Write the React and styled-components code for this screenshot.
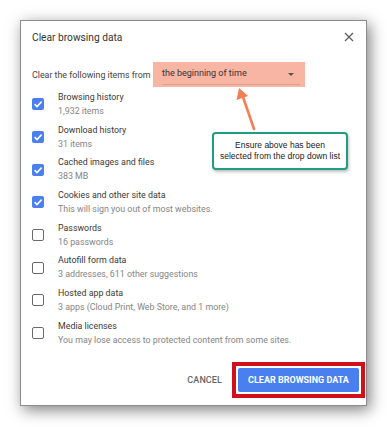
import React from 'react';
import styled, { createGlobalStyle } from 'styled-components';

const GlobalStyle = createGlobalStyle`
  html, body {
    margin: 0;
    padding: 0;
    background: #fff;
  }
  body {
    font-family: Roboto, "Liberation Sans", Arial, sans-serif;
  }
`;

const items = [
  { title: 'Browsing history', sub: '1,932 items', checked: true },
  { title: 'Download history', sub: '31 items', checked: true },
  { title: 'Cached images and files', sub: '383 MB', checked: true },
  { title: 'Cookies and other site data', sub: 'This will sign you out of most websites.', checked: true },
  { title: 'Passwords', sub: '16 passwords', checked: false },
  { title: 'Autofill form data', sub: '3 addresses, 611 other suggestions', checked: false },
  { title: 'Hosted app data', sub: '3 apps (Cloud Print, Web Store, and 1 more)', checked: false },
  { title: 'Media licenses', sub: 'You may lose access to protected content from some sites.', checked: false },
];

const App = () => {
  return (
    <Page>
      <GlobalStyle />
      <Dialog>
        <Header>
          <Title>Clear browsing data</Title>
          <CloseBtn>
            <svg width="10" height="10" viewBox="0 0 10 10">
              <path d="M1 1 L9 9 M9 1 L1 9" stroke="#5f5f5f" strokeWidth="1.3" />
            </svg>
          </CloseBtn>
        </Header>

        <RangeRow>
          <RangeLabel>Clear the following items from</RangeLabel>
          <RangeSelect>
            <SelectInner>
              <span>the beginning of time</span>
              <Caret />
            </SelectInner>
          </RangeSelect>
        </RangeRow>

        <List>
          {items.map((item) => (
            <Row key={item.title}>
              <Check $checked={item.checked}>
                {item.checked && (
                  <svg width="12" height="12" viewBox="0 0 12 12">
                    <path d="M2.6 6.2 L5 8.5 L9.6 3.6" fill="none" stroke="#fff" strokeWidth="1.6" />
                  </svg>
                )}
              </Check>
              <RowText>
                <RowTitle>{item.title}</RowTitle>
                <RowSub>{item.sub}</RowSub>
              </RowText>
            </Row>
          ))}
        </List>

        <Footer>
          <CancelBtn>CANCEL</CancelBtn>
          <Highlight>
            <PrimaryBtn>CLEAR BROWSING DATA</PrimaryBtn>
          </Highlight>
        </Footer>

        <Arrow width="24" height="44" viewBox="0 0 24 44">
          <path d="M19 42 L8 10" stroke="#f07f55" strokeWidth="2.6" strokeLinecap="round" />
          <path d="M4 1 L1.5 13 L13 9 Z" fill="#f07f55" />
        </Arrow>
        <Callout>
          Ensure above has been
          <br />
          selected from the drop down list
        </Callout>
      </Dialog>
    </Page>
  );
};

export default App;

const Page = styled.div`
  width: 387px;
  height: 427px;
  padding: 20px 0 0 20px;
  box-sizing: border-box;
`;

const Dialog = styled.div`
  position: relative;
  width: 347px;
  height: 386px;
  box-sizing: border-box;
  background: #fff;
  border: 1px solid #8c8c8c;
  box-shadow: 3px 4px 14px rgba(0, 0, 0, 0.5);
  display: flex;
  flex-direction: column;
`;

const Header = styled.div`
  height: 31px;
  padding: 0 7px 0 11px;
  display: flex;
  align-items: center;
  justify-content: space-between;
`;

const Title = styled.div`
  font-size: 10.2px;
  color: #333;
  padding-top: 1px;
`;

const CloseBtn = styled.div`
  width: 20px;
  height: 20px;
  display: flex;
  align-items: center;
  justify-content: center;
`;

const RangeRow = styled.div`
  margin-top: 10px;
  height: 25px;
  padding-left: 11px;
  display: flex;
  align-items: center;
`;

const RangeLabel = styled.div`
  font-size: 8.85px;
  color: #444;
  width: 121px;
  white-space: nowrap;
`;

const RangeSelect = styled.div`
  width: 152px;
  height: 25px;
  box-sizing: border-box;
  background: #f8b5a4;
  padding: 0 5px 0 9px;
  display: flex;
  align-items: center;
`;

const SelectInner = styled.div`
  flex: 1;
  height: 16px;
  margin-top: 3px;
  border-bottom: 1px solid #d9a092;
  display: flex;
  align-items: flex-start;
  justify-content: space-between;
  font-size: 9px;
  color: #333;
  padding-right: 6px;
`;

const Caret = styled.span`
  width: 0;
  height: 0;
  margin-top: 5px;
  border-left: 3.5px solid transparent;
  border-right: 3.5px solid transparent;
  border-top: 3.5px solid #555;
`;

const List = styled.div`
  margin-top: 2px;
  display: flex;
  flex-direction: column;
`;

const Row = styled.div`
  height: 32.7px;
  padding-left: 11px;
  display: flex;
  align-items: center;
  gap: 14px;
`;

const Check = styled.div`
  width: 12px;
  height: 12px;
  box-sizing: border-box;
  border-radius: 2px;
  background: ${(p) => (p.$checked ? '#4a7fef' : '#fff')};
  border: ${(p) => (p.$checked ? 'none' : '1.5px solid #6a6a6a')};
  display: flex;
  align-items: center;
  justify-content: center;
  margin-top: -2px;
`;

const RowText = styled.div`
  display: flex;
  flex-direction: column;
  padding-bottom: 2px;
`;

const RowTitle = styled.div`
  font-size: 8.85px;
  line-height: 14px;
  color: #3a3a3a;
`;

const RowSub = styled.div`
  font-size: 8.85px;
  line-height: 15px;
  color: #858585;
`;

const Footer = styled.div`
  margin-top: auto;
  margin-bottom: 7px;
  padding-right: 1px;
  display: flex;
  align-items: center;
  justify-content: flex-end;
  gap: 10px;
`;

const CancelBtn = styled.div`
  font-size: 9px;
  font-weight: 500;
  color: #666;
  letter-spacing: 0.1px;
`;

const Highlight = styled.div`
  border: 4px solid #d0101b;
  padding: 2px;
  background: #fff;
`;

const PrimaryBtn = styled.div`
  width: 121px;
  height: 24px;
  border-radius: 2px;
  background: #4a7fef;
  color: #fff;
  font-size: 9px;
  font-weight: 700;
  display: flex;
  align-items: center;
  justify-content: center;
`;

const Arrow = styled.svg`
  position: absolute;
  left: 214px;
  top: 66px;
`;

const Callout = styled.div`
  position: absolute;
  left: 191px;
  top: 111px;
  width: 136px;
  height: 38px;
  box-sizing: border-box;
  border: 2px solid #1f9e80;
  border-radius: 4px;
  background: #fff;
  box-shadow: 1px 2px 3px rgba(0, 0, 0, 0.25);
  font-family: "Liberation Sans", Arial, sans-serif;
  font-size: 8.5px;
  line-height: 11px;
  color: #222;
  white-space: nowrap;
  text-align: center;
  display: flex;
  align-items: center;
  justify-content: center;
`;
